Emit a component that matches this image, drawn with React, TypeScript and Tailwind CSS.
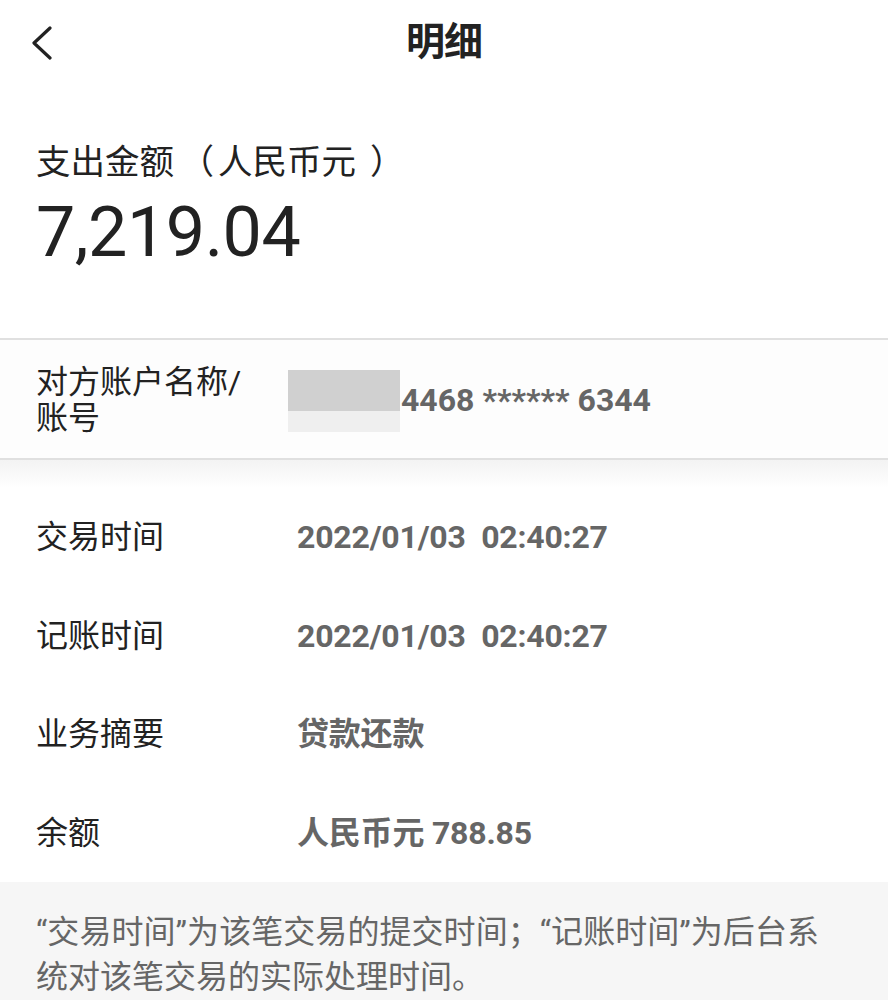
export default function App() {
  const rows = [
    { label: "交易时间", value: "2022/01/03\u00a0\u00a002:40:27" },
    { label: "记账时间", value: "2022/01/03\u00a0\u00a002:40:27" },
    { label: "业务摘要", value: "贷款还款" },
    { label: "余额", value: "人民币元 788.85" },
  ]

  return (
    <div
      className="w-[888px] h-[1000px] overflow-hidden bg-white text-[#222]"
      style={{ fontFamily: 'Roboto, "Noto Sans CJK SC", sans-serif' }}
    >
      {/* header */}
      <div className="relative flex h-[86px] items-center justify-center">
        <svg
          className="absolute left-[28px] top-[26px]"
          width="28"
          height="34"
          viewBox="0 0 28 34"
          fill="none"
          stroke="#222"
          strokeWidth="3.2"
          strokeLinecap="round"
          strokeLinejoin="round"
        >
          <path d="M22 2 L6 17 L22 32" />
        </svg>
        <div className="-mt-[2px] text-[39px] font-bold tracking-tight text-[#222]">明细</div>
      </div>

      {/* amount */}
      <div className="flex h-[252px] flex-col px-[36px] pt-[50px]">
        <div
          className="flex text-[34.5px] leading-[46px] text-[#222]"
          style={{ fontFamily: '"Noto Sans CJK SC", sans-serif' }}
        >
          <span>支出金额</span>
          <span className="inline-block w-[44px] text-right pr-[4px]">（</span>
          <span>人民币元</span>
          <span className="inline-block w-[44px] pl-[14px]">）</span>
        </div>
        <div className="mt-[10px] text-[70px] leading-[80px] tracking-[-0.5px] text-[#222]">7,219.04</div>
      </div>

      {/* account */}
      <div className="flex h-[122px] items-center border-y-2 border-[#e0e0e0] bg-[#fdfdfd] px-[36px]">
        <div className="w-[252px] pt-[2px] text-[32px] leading-[36px] text-[#222]">
          对方账户名称/
          <br />
          账号
        </div>
        <div className="flex items-center pt-[2px]">
          <div className="mt-[2px] flex h-[62px] w-[112px] flex-col">
            <div className="h-[41px] bg-[#d0d0d0]" />
            <div className="h-[21px] bg-[#efefef]" />
          </div>
          <div className="ml-[1px] text-[32px] font-bold text-[#666]">4468 ****** 6344</div>
        </div>
      </div>
      <div className="h-[28px] bg-gradient-to-b from-[#f3f3f3] to-white" />

      {/* detail rows */}
      <div className="flex flex-col px-[36px]">
        {rows.map((r) => (
          <div key={r.label} className="flex h-[98.5px] items-center">
            <div className="w-[261px] text-[32px] text-[#222]">{r.label}</div>
            <div className="text-[32px] font-bold tracking-[-0.2px] text-[#666]">{r.value}</div>
          </div>
        ))}
      </div>

      {/* footer note */}
      <div className="h-[200px] bg-[#f6f6f6] px-[36px] pt-[28px] text-[32px] leading-[45px] text-[#666]">
        <div className="w-[783px] text-justify [text-align-last:justify]">
          “交易时间”为该笔交易的提交时间；“记账时间”为后台系
        </div>
        <div>统对该笔交易的实际处理时间。</div>
      </div>
    </div>
  )
}
